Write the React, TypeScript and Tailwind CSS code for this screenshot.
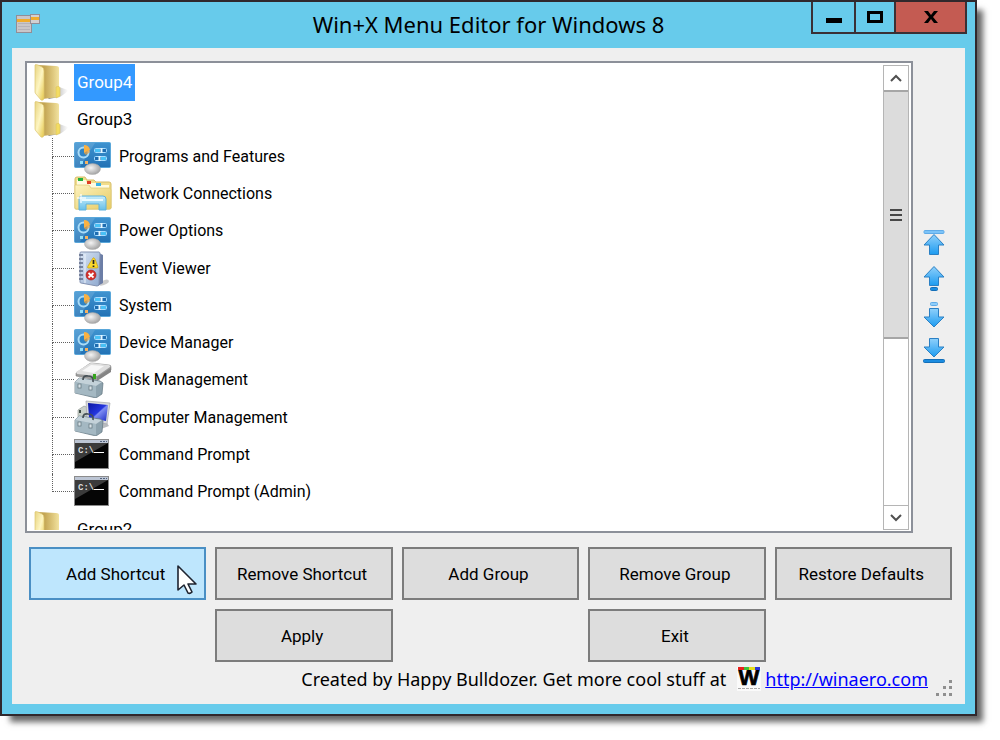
import { useState, type ReactNode } from "react";

type IconProps = { className?: string };

function AppIcon() {
  return (
    <svg width="24" height="19" viewBox="0 0 24 19" className="ml-[14px]" aria-hidden>
      <rect x="0.5" y="1.5" width="15" height="17" fill="#c9c6c9" stroke="#928e96" />
      <path d="M2 9.5h12M2 12.5h12M2 15.5h12" stroke="#b5b2b8" />
      <rect x="1" y="5" width="14" height="3" fill="#f0ac2c" />
      <rect x="14.5" y="0.5" width="9" height="9" fill="#d3d0d2" stroke="#928e96" />
      <rect x="15" y="3" width="8" height="3" fill="#f0ac2c" />
    </svg>
  );
}

function FolderIcon() {
  return (
    <svg width="36" height="37" viewBox="0 0 36 37" className="shrink-0" aria-hidden>
      <defs>
        <linearGradient id="folder-back" x1="0" x2="1" y1="0" y2="0">
          <stop offset="0.3" stopColor="#c4a654" />
          <stop offset="0.7" stopColor="#e0ca80" />
          <stop offset="1" stopColor="#f5e7a6" />
        </linearGradient>
        <linearGradient id="folder-front" x1="0" x2="1" y1="0" y2="1">
          <stop offset="0" stopColor="#e8d480" />
          <stop offset="0.5" stopColor="#fdf5c2" />
          <stop offset="1" stopColor="#e6c748" />
        </linearGradient>
        <linearGradient id="folder-shade" x1="0" x2="1" y1="0" y2="0">
          <stop offset="0" stopColor="#444" stopOpacity="0.8" />
          <stop offset="1" stopColor="#888" stopOpacity="0" />
        </linearGradient>
      </defs>
      <path d="M14 35 25 23l9 3q1 1-8 7Z" fill="url(#folder-shade)" />
      <path d="M4 1 22 2q3 0 3 2v22l1 7-18 2Z" fill="url(#folder-back)" />
      <path d="M22 23q4-2 4 2v7l-4 2Z" fill="#f3dc62" stroke="#dcc25c" strokeWidth="0.6" />
      <path d="M1 1q0-1 3 0l4 2q2 1 2 4v26q0 4-3 3l-5-6q-1-1-1-2Z" fill="url(#folder-front)" stroke="#dcc671" strokeWidth="0.7" />
    </svg>
  );
}

function ControlPanelIcon({ className }: IconProps) {
  return (
    <svg width="38" height="37" viewBox="0 0 38 37" className={className} aria-hidden>
      <defs>
        <linearGradient id="panel-blue" x1="0" x2="0" y1="0" y2="1">
          <stop offset="0" stopColor="#3f93d0" />
          <stop offset="1" stopColor="#2272b5" />
        </linearGradient>
        <radialGradient id="panel-base" cx="0.4" cy="0.4" r="0.6">
          <stop offset="0" stopColor="#f4f4f4" />
          <stop offset="1" stopColor="#a6a6a6" />
        </radialGradient>
      </defs>
      <rect x="0.5" y="4.5" width="36" height="25" rx="1" fill="url(#panel-blue)" stroke="#5aa7da" />
      <path d="M1 5h20L6 29H1Z" fill="#fff" opacity="0.13" />
      <circle cx="9.5" cy="14.5" r="5" fill="#2e84c5" stroke="#a9dcf8" strokeWidth="2" />
      <path d="M10 15V7q5 0 6 5Z" fill="#f9b143" />
      <path d="m10 15 5-3 1 2-4 3Z" fill="#f5a43a" opacity="0.7" />
      <rect x="20.5" y="10.5" width="12" height="4" rx="1" fill="#1e6db1" stroke="#a5dbff" />
      <rect x="21" y="11" width="5" height="3" fill="#48c0f5" />
      <path d="M27.5 10v5" stroke="#e4f6ff" strokeWidth="2" />
      <rect x="20.5" y="18.5" width="12" height="4" rx="1" fill="#1e6db1" stroke="#a5dbff" />
      <rect x="27" y="19" width="5" height="3" fill="#48c0f5" />
      <path d="M25.5 18v5" stroke="#e4f6ff" strokeWidth="2" />
      <rect x="6" y="23" width="3" height="3" fill="#8fe0fb" />
      <rect x="11" y="23" width="3" height="3" fill="#f6b25f" />
      <ellipse cx="18.5" cy="31" rx="8" ry="5.5" fill="url(#panel-base)" stroke="#aaa" strokeWidth="0.5" />
    </svg>
  );
}

function NetworkIcon({ className }: IconProps) {
  return (
    <svg width="38" height="36" viewBox="0 0 38 36" className={className} aria-hidden>
      <defs>
        <linearGradient id="net-folder" x1="0" x2="1" y1="0" y2="1">
          <stop offset="0" stopColor="#fdf3c0" />
          <stop offset="1" stopColor="#e7cb62" />
        </linearGradient>
        <linearGradient id="net-pipe" x1="0" x2="0" y1="0" y2="1">
          <stop offset="0" stopColor="#c7edfb" />
          <stop offset="1" stopColor="#67bfe9" />
        </linearGradient>
      </defs>
      <path d="M1 3q0-2 2-2h8l2 3h7l2 2h13q2 0 2 2v24q0 1-2 1H2q-1 0-1-1Z" fill="#f1dd8c" stroke="#d6bd68" />
      <path d="M3 4h9l1 3h10l2 2h10v3H3Z" fill="#fffbe2" />
      <rect x="4" y="2" width="5" height="3" fill="#24b13d" />
      <rect x="13" y="5" width="4" height="3" fill="#e03d22" />
      <rect x="22" y="7" width="5" height="3" fill="#39b3e8" />
      <path d="M1 9h14l2 3h19l1 2v18q0 1-2 1H2q-1 0-1-1Z" fill="url(#net-folder)" stroke="#ddc873" strokeWidth="0.7" />
      <path d="M5 34V23q0-3 3-3h21q3 0 3 3v11h-7v-6H12v6Z" fill="url(#net-pipe)" stroke="#5eb2de" />
      <path d="M8 24h21" stroke="#eafaff" strokeWidth="2" />
      <path d="M7 18v9M3 22h9" stroke="#fff" strokeWidth="1.5" opacity="0.8" />
    </svg>
  );
}

function EventViewerIcon({ className }: IconProps) {
  return (
    <svg width="38" height="36" viewBox="0 0 38 36" className={className} aria-hidden>
      <defs>
        <linearGradient id="event-book" x1="0" x2="1" y1="0" y2="1">
          <stop offset="0" stopColor="#d7e3f3" />
          <stop offset="1" stopColor="#8fa9cf" />
        </linearGradient>
      </defs>
      <path d="M28 30q6-3 7 0 0 3-9 5Z" fill="#9a9a9a" opacity="0.5" />
      <path d="m25 2 4 2v28l-5 3Z" fill="#6c7ea6" />
      <path d="M7 1h18q1 0 1 2l-1 30q0 2-2 2L7 32q-1 0-1-1V2q0-1 1-1Z" fill="url(#event-book)" stroke="#8493b2" />
      <path d="M5 4h4M5 8h4M5 12h4M5 16h4M5 20h4M5 24h4M5 28h4" stroke="#5d6a86" strokeWidth="1.5" />
      <path d="M11 3v29" stroke="#eef4fc" />
      <path d="M19 7q1-1 2 1l3 8q0 1-1 1h-9q-1 0 0-2Z" fill="#fbd92c" stroke="#c7a010" strokeWidth="0.7" />
      <path d="M19.5 9v4M19.5 14.5v1.5" stroke="#222" strokeWidth="1.7" />
      <circle cx="17" cy="24" r="5" fill="#d5312b" stroke="#9e1f1c" strokeWidth="0.6" />
      <path d="m14.5 22 5 4.5m0-4.5-5 4.5" stroke="#fff" strokeWidth="1.7" />
    </svg>
  );
}

// shared by the disk and computer management icons
function Toolbox() {
  return (
    <g>
      <path d="m1 20 4-4 21 3 3 2-1 11-6 4L1 31Z" fill="#8da2ad" stroke="#62757f" strokeWidth="0.7" />
      <path d="m1 20 21 4v11L1 31Z" fill="#a4b8c2" />
      <path d="m1 20 4-4 23 4-6 4Z" fill="#c4d2d9" />
      <path d="M9 18q0-5 5-4 6 0 5 6" fill="none" stroke="#454f55" strokeWidth="1.7" />
      <rect x="4" y="22" width="3" height="4" fill="#d9e3e8" stroke="#60717a" strokeWidth="0.7" />
      <rect x="15" y="24" width="3" height="4" fill="#d9e3e8" stroke="#60717a" strokeWidth="0.7" />
    </g>
  );
}

function DiskIcon({ className }: IconProps) {
  return (
    <svg width="38" height="36" viewBox="0 0 38 36" className={className} aria-hidden>
      <path d="m2 11 13-9q1-1 3-1l17 2q2 0 2 2v3L22 18 2 14Z" fill="#9c9c9c" stroke="#777" strokeWidth="0.5" />
      <path d="m2 10 13-8q1-1 3-1l17 2q2 1 1 2L23 14 3 12Z" fill="#dedede" />
      <path d="m8 9 9-6 13 1-10 7Z" fill="#f7f7f7" />
      <path d="m23 15 14-9v4L23 19Z" fill="#858585" />
      <Toolbox />
      <rect x="19" y="12" width="3" height="5" fill="#35a51d" />
    </svg>
  );
}

function ComputerIcon({ className }: IconProps) {
  return (
    <svg width="38" height="36" viewBox="0 0 38 36" className={className} aria-hidden>
      <defs>
        <linearGradient id="screen-blue" x1="0" x2="1" y1="0" y2="1">
          <stop offset="0" stopColor="#0b16a0" />
          <stop offset="0.5" stopColor="#2536df" />
          <stop offset="0.55" stopColor="#7d8cf2" />
          <stop offset="1" stopColor="#1b2cc4" />
        </linearGradient>
      </defs>
      <path d="m4 10 6-4 5 2v14H4Z" fill="#c9d0c9" stroke="#8a918c" strokeWidth="0.6" />
      <rect x="5" y="10" width="2" height="3" fill="#3b4a44" />
      <path d="m24 22 9 1 2 3-8 3-6-4Z" fill="#b9bcc0" />
      <path d="m12 1 24 2-3 21-20-4Z" fill="#d8dadd" stroke="#a6a8ab" strokeWidth="0.7" />
      <path d="m14 3 20 2-2 16-17-3Z" fill="url(#screen-blue)" />
      <Toolbox />
    </svg>
  );
}

function CommandIcon({ className }: IconProps) {
  return (
    <svg width="38" height="36" viewBox="0 0 38 36" className={className} aria-hidden>
      <rect x="0.5" y="2.5" width="34" height="29" fill="#050505" stroke="#8c8c8c" />
      <rect x="1" y="3" width="33" height="3" fill="#bcc5d4" />
      <path d="M26 4.5h2M29 4.5h2M32 4.5h1" stroke="#52617b" />
      <path d="M1 6h33L1 25Z" fill="#fff" opacity="0.22" />
      <text x="4" y="16" fill="#ddd" fontSize="9" fontWeight="bold" fontFamily="Liberation Mono, monospace">
        C:\
      </text>
      <path d="M20 15.5h10" stroke="#fff" />
    </svg>
  );
}

function WinaeroLogo() {
  return (
    <svg width="24" height="24" viewBox="0 0 24 24" className="overflow-visible" aria-hidden>
      <rect width="24" height="24" fill="#fafafa" />
      <text x="12" y="18" textAnchor="middle" fontSize="22" fontWeight="bold" stroke="#000" strokeWidth="0.7" fontFamily="Liberation Sans, sans-serif">
        W
      </text>
      <rect x="1" y="0" width="6" height="3" fill="#e8201c" />
      <rect x="7" y="0" width="5" height="3" fill="#3fc03c" />
      <rect x="12" y="0" width="6" height="3" fill="#e6dd1f" />
      <rect x="18" y="0" width="5" height="3" fill="#2b35d8" />
      <path d="M1 21.5h22" stroke="#aaa" strokeDasharray="3 1" />
    </svg>
  );
}

function Cursor() {
  return (
    <svg width="22" height="32" viewBox="0 0 22 32" className="pointer-events-none absolute right-1.5 bottom-0.5" aria-hidden>
      <path d="M2 2v24l6-5 4 8q2 1 4-1l-4-8h8Z" fill="#fff" stroke="#1f2430" strokeWidth="1.6" strokeLinejoin="round" />
    </svg>
  );
}

function MoveArrow({ children }: { children: ReactNode }) {
  return (
    <svg width="22" height="26" viewBox="0 0 22 26" fill="url(#arrow-blue)" stroke="#2a80c4" aria-hidden>
      <defs>
        <linearGradient id="arrow-blue" x1="0" x2="0" y1="0" y2="1">
          <stop offset="0" stopColor="#8fd0fb" />
          <stop offset="1" stopColor="#1c9bf0" />
        </linearGradient>
      </defs>
      {children}
    </svg>
  );
}

const moves = [
  {
    label: "Move to top",
    drawing: (
      <>
        <rect x="1" y="0.5" width="20" height="3" rx="1" fill="#7cc3f8" stroke="#5fabe8" />
        <path d="M11 4.5 21 15h-5.5v9.5h-9V15H1Z" />
      </>
    ),
  },
  {
    label: "Move up",
    drawing: (
      <>
        <path d="M11 0.5 21 11h-5.5v8.5h-9V11H1Z" />
        <rect x="7.5" y="21.5" width="7" height="3" rx="1" fill="#1b8ce0" stroke="#146fb8" />
      </>
    ),
  },
  {
    label: "Move down",
    drawing: (
      <>
        <rect x="7.5" y="0.5" width="7" height="3" rx="1" fill="#8fcdf9" stroke="#5fabe8" />
        <path d="M6.5 6.5h9V15H21L11 25 1 15h5.5Z" />
      </>
    ),
  },
  {
    label: "Move to bottom",
    drawing: (
      <>
        <path d="M6.5 0.5h9V9H21L11 19 1 9h5.5Z" />
        <rect x="0.5" y="21.5" width="21" height="3" rx="1" fill="#1b8ce0" stroke="#146fb8" />
      </>
    ),
  },
];

const shortcuts = [
  { name: "Programs and Features", icon: ControlPanelIcon },
  { name: "Network Connections", icon: NetworkIcon },
  { name: "Power Options", icon: ControlPanelIcon },
  { name: "Event Viewer", icon: EventViewerIcon },
  { name: "System", icon: ControlPanelIcon },
  { name: "Device Manager", icon: ControlPanelIcon },
  { name: "Disk Management", icon: DiskIcon },
  { name: "Computer Management", icon: ComputerIcon },
  { name: "Command Prompt", icon: CommandIcon },
  { name: "Command Prompt (Admin)", icon: CommandIcon },
];

const actions = ["Add Shortcut", "Remove Shortcut", "Add Group", "Remove Group", "Restore Defaults"];

function TitleBar() {
  return (
    <header className="flex h-[46px] shrink-0 items-start">
      <div className="flex h-full flex-1 items-center pb-1">
        <AppIcon />
      </div>
      <h1 className="font-['Noto_Sans',sans-serif] text-[22px] leading-[44px] whitespace-nowrap">
        Win+X Menu Editor for Windows 8
      </h1>
      <div className="flex flex-1 justify-end">
        <div className="mr-2 flex h-8 border-x-2 border-b-2 border-[#3a3035]">
          <button aria-label="Minimize" className="grid w-[43px] place-items-center border-r-2 border-[#3a3035]">
            <svg width="16" height="16" aria-hidden>
              <rect y="9" width="16" height="5" />
            </svg>
          </button>
          <button aria-label="Maximize" className="grid w-10 place-items-center border-r-2 border-[#3a3035]">
            <svg width="16" height="14" aria-hidden>
              <rect x="1.5" y="2.5" width="13" height="9" fill="none" stroke="#000" strokeWidth="3" />
            </svg>
          </button>
          <button aria-label="Close" className="grid w-[69px] place-items-center bg-[#c45b52]">
            <svg width="16" height="14" aria-hidden>
              <path d="M1 1h4l3 4 3-4h4l-5 6 5 6h-4L8 9l-3 4H1l5-6Z" />
            </svg>
          </button>
        </div>
      </div>
    </header>
  );
}

function Group({ name, selected, onSelect }: { name: string; selected: string; onSelect: (name: string) => void }) {
  return (
    <button onClick={() => onSelect(name)} className="flex h-[37px] items-center gap-1 pl-[7px]">
      <FolderIcon />
      <span
        className={
          selected === name
            ? "flex h-full items-center bg-[#3399ff] px-[3px] pb-px text-white"
            : "flex h-full items-center px-[3px] pb-px"
        }
      >
        {name}
      </span>
    </button>
  );
}

function ShortcutTree() {
  const [selected, setSelected] = useState("Group4");

  return (
    <div className="min-w-0 flex-1 overflow-hidden pt-px">
      <Group name="Group4" selected={selected} onSelect={setSelected} />
      <Group name="Group3" selected={selected} onSelect={setSelected} />
      <ul className="grid h-[373px] auto-rows-fr pl-[25px] text-[16px]">
        {shortcuts.map((s, i) => {
          const Icon = s.icon;
          return (
            <li key={s.name} className="flex items-center">
              <span aria-hidden className="grid h-full w-[22px] grid-rows-2">
                <span className="border-b border-l border-dotted border-[#606060]" />
                {i < shortcuts.length - 1 && <span className="border-l border-dotted border-[#606060]" />}
              </span>
              <Icon className="shrink-0" />
              <span className="pl-[7px] whitespace-nowrap">{s.name}</span>
            </li>
          );
        })}
      </ul>
      <Group name="Group2" selected={selected} onSelect={setSelected} />
    </div>
  );
}

function ScrollBar() {
  return (
    <div className="mt-[2px] mr-[2px] flex w-[26px] flex-col border border-[#b5b5b5]">
      <button aria-label="Scroll up" className="grid h-6 shrink-0 place-items-center">
        <svg width="12" height="8" fill="none" stroke="#505050" strokeWidth="2" aria-hidden>
          <path d="m1 7 5-5 5 5" />
        </svg>
      </button>
      <div className="flex flex-1 flex-col">
        <div className="grid h-3/5 place-items-center border-y-2 border-[#a6a6a6] bg-[#dcdcdc]">
          <svg width="12" height="12" stroke="#484848" strokeWidth="2" aria-hidden>
            <path d="M0 1h12M0 6h12M0 11h12" />
          </svg>
        </div>
      </div>
      <button aria-label="Scroll down" className="grid h-6 shrink-0 place-items-center border-t border-[#b5b5b5]">
        <svg width="12" height="8" fill="none" stroke="#505050" strokeWidth="2" aria-hidden>
          <path d="m1 1 5 5 5-5" />
        </svg>
      </button>
    </div>
  );
}

function ActionButton({ label, className }: { label: string; className?: string }) {
  const hot = label === "Add Shortcut";
  return (
    <button
      className={`relative h-[53px] border-2 pr-1 whitespace-nowrap ${
        hot ? "border-[#4a8fc4] bg-[#bee6fd]" : "border-[#7c7c7c] bg-[#dddddd]"
      } ${className ?? ""}`}
    >
      {label}
      {hot && <Cursor />}
    </button>
  );
}

export default function App() {
  return (
    <div className="flex h-screen min-h-[600px] flex-col bg-white pr-[23px] pb-6 font-[Roboto,sans-serif] text-[17px] leading-6 text-black">
      <div className="flex min-h-0 flex-1 flex-col border-2 border-[#30282c] bg-[#67cbeb] shadow-[8px_8px_6px_-2px_rgba(0,0,0,0.6)]">
        <TitleBar />
        <main className="mx-[10px] mb-[10px] flex min-h-0 flex-1 flex-col bg-[#efefef] pt-[13px]">
          <div className="flex min-h-0 flex-1 pl-[13px]">
            <div className="flex min-w-0 flex-1 border-2 border-[#8c9099] bg-white pb-px">
              <ShortcutTree />
              <ScrollBar />
            </div>
            <div className="flex w-[52px] shrink-0 flex-col items-center justify-center gap-[10px] pr-[10px]">
              {moves.map((m) => (
                <button key={m.label} aria-label={m.label}>
                  <MoveArrow>{m.drawing}</MoveArrow>
                </button>
              ))}
            </div>
          </div>

          <div className="mt-[14px] grid grid-cols-5 gap-[9px] pr-[13px] pl-[17px]">
            {actions.map((a) => (
              <ActionButton key={a} label={a} />
            ))}
            <ActionButton label="Apply" className="col-start-2" />
            <ActionButton label="Exit" className="col-start-4" />
          </div>

          <footer className="mb-2 flex h-[34px] items-center justify-end pr-[13px] font-['Noto_Sans',sans-serif] text-[18px] whitespace-nowrap">
            <p>Created by Happy Bulldozer. Get more cool stuff at</p>
            <span className="mr-1 ml-[11px]">
              <WinaeroLogo />
            </span>
            <a href="http://winaero.com" className="text-[#0000ff] underline">
              http://winaero.com
            </a>
            <svg width="16" height="16" fill="#8f8f8f" className="ml-2 self-end" aria-hidden>
              <path d="M13 0h3v3h-3zM7 6h3v3H7zM13 6h3v3h-3zM0 13h3v3H0zM7 13h3v3H7zM13 13h3v3h-3z" />
            </svg>
          </footer>
        </main>
      </div>
    </div>
  );
}
